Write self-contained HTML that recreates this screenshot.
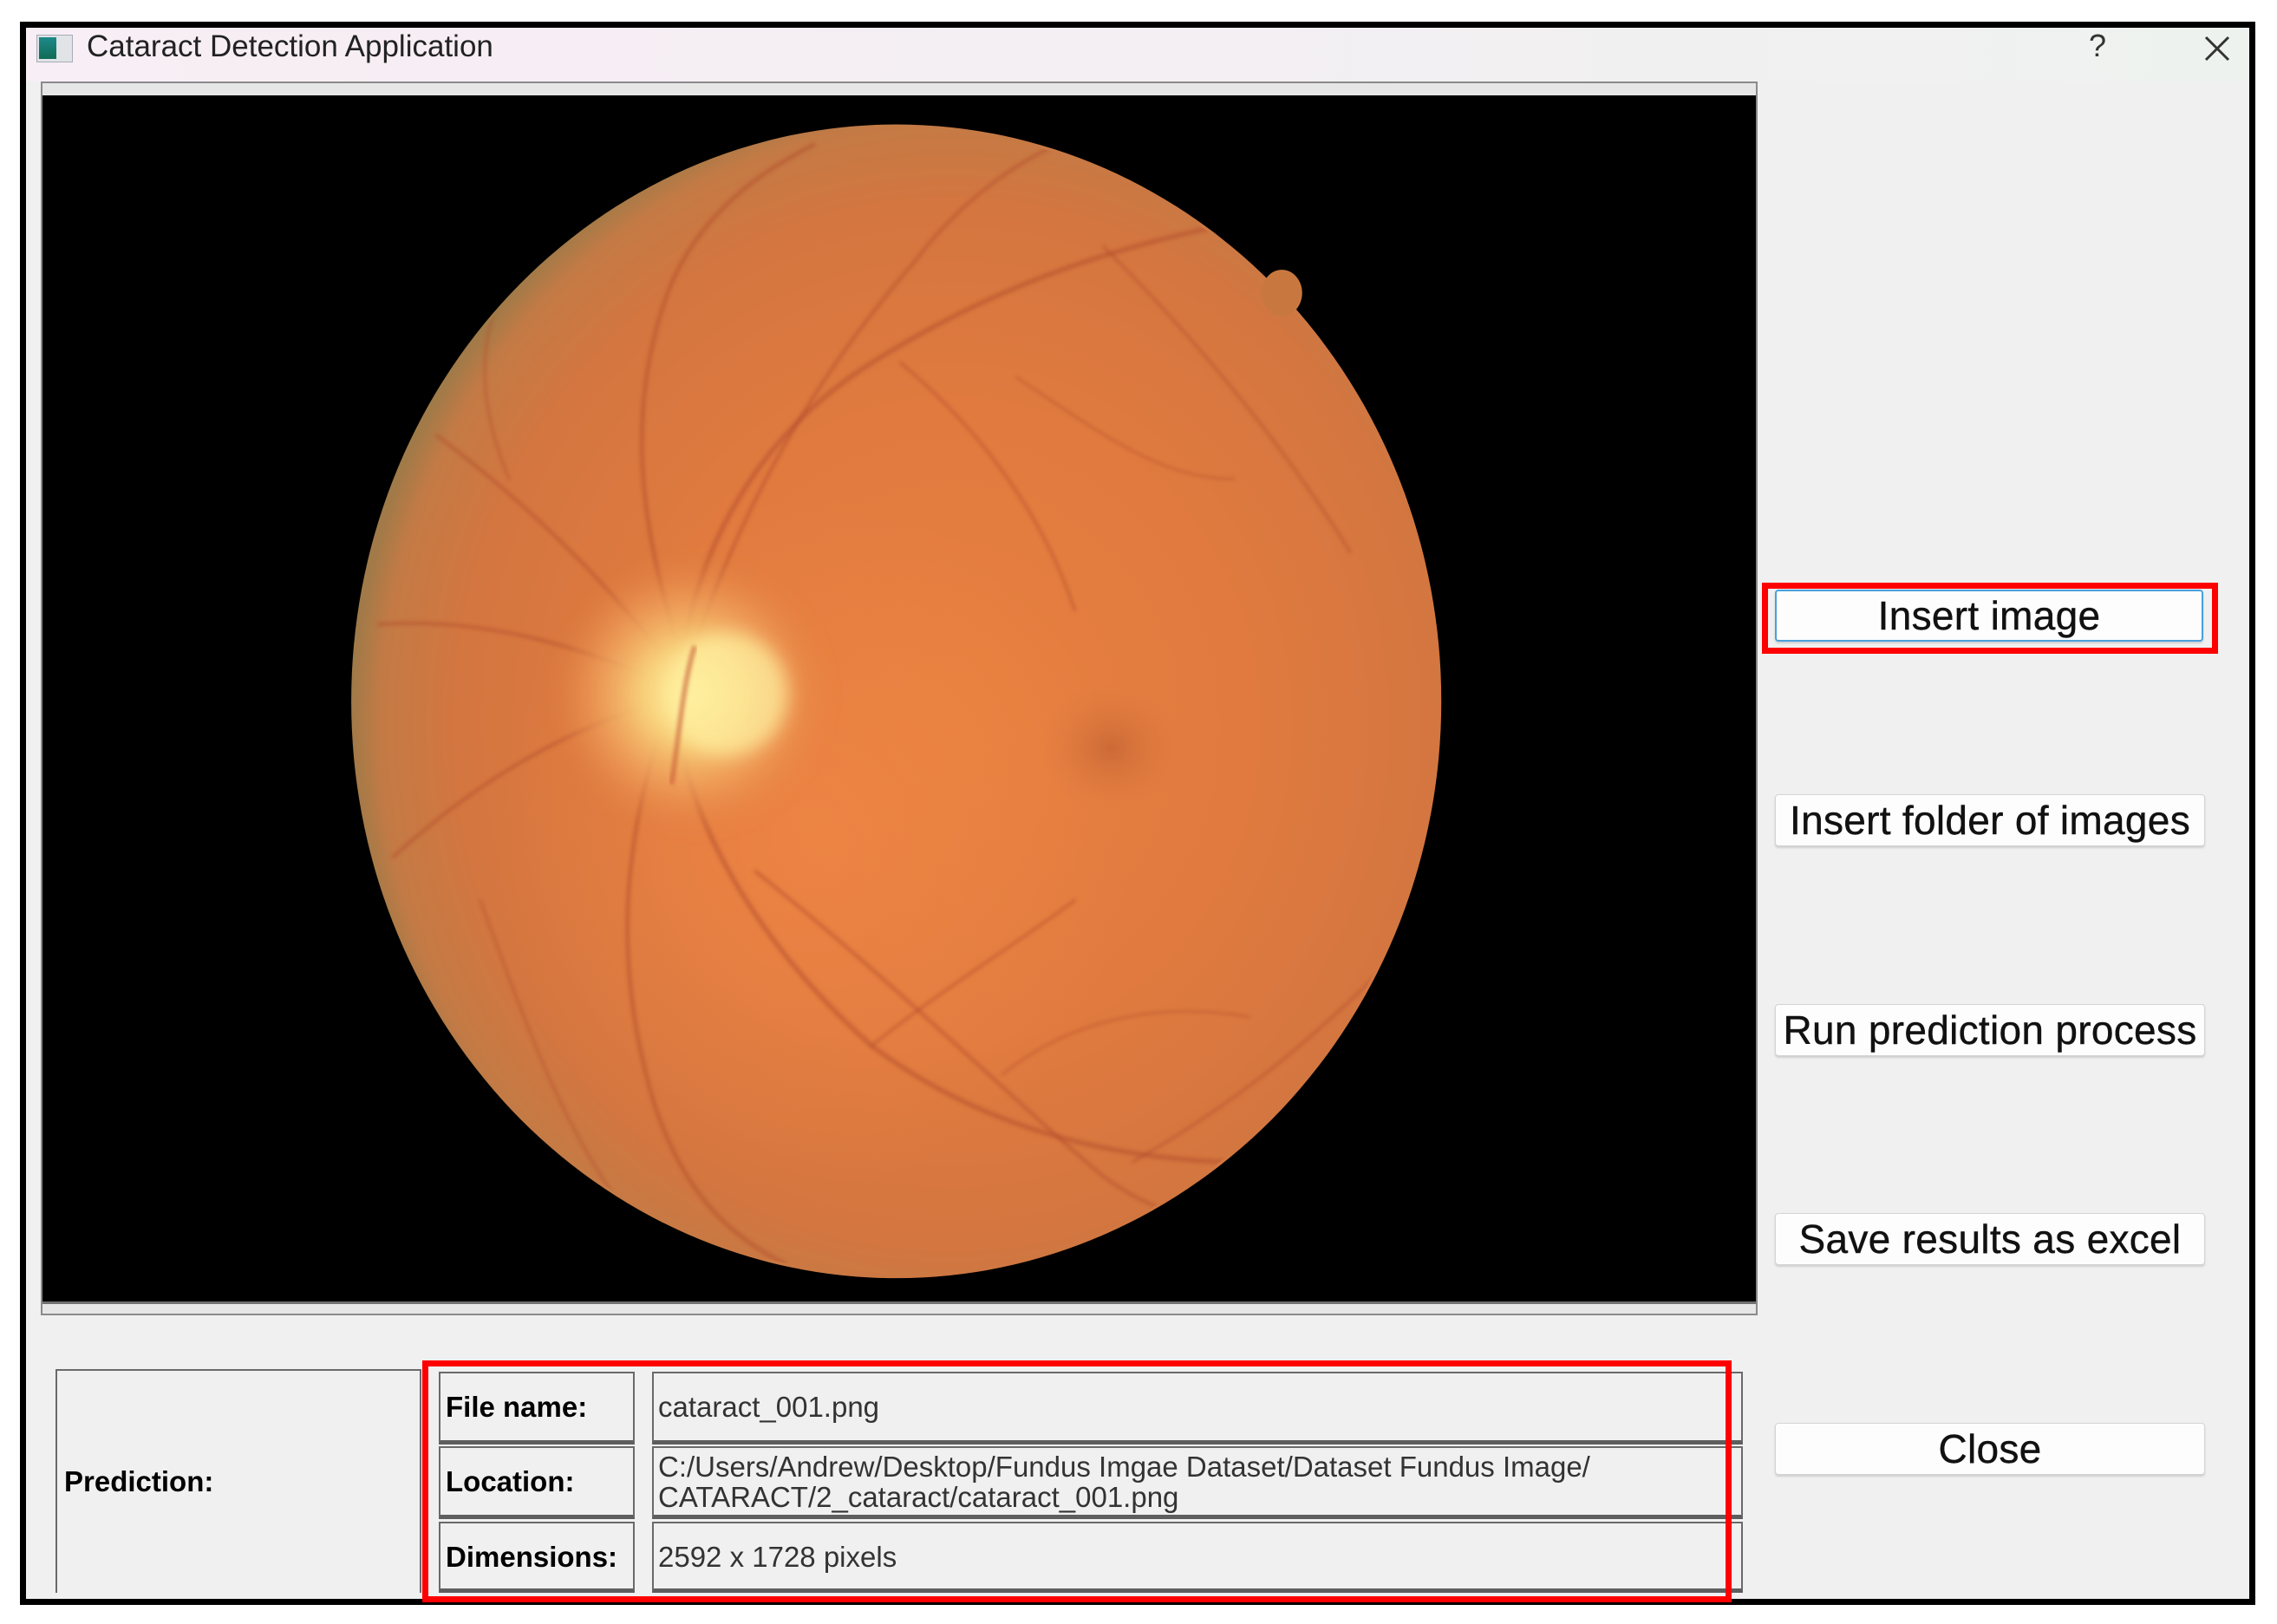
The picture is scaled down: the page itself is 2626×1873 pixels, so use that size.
<!DOCTYPE html>
<html><head><meta charset="utf-8">
<style>
html,body{margin:0;padding:0;}
body{width:2626px;height:1873px;background:#fff;position:relative;overflow:hidden;font-family:"Liberation Sans",Arial,sans-serif;}
.abs{position:absolute;}
#frame{left:23px;top:25px;width:2564px;height:1812px;border:7px solid #000;background:#f0f0f0;}
#title{left:30px;top:32px;width:2564px;height:62px;background:linear-gradient(90deg,#f8eef5 0%,#f3eff2 55%,#eef2ef 100%);}
.btn{position:absolute;left:2047px;width:494px;height:58px;background:#fdfdfd;border:1px solid #d4d4d4;border-radius:4px;box-shadow:0 2px 2px #cfcfcf;font-size:46px;color:#111;text-align:center;line-height:58px;letter-spacing:0.3px;-webkit-text-stroke:0.4px #111;}
.cell{position:absolute;background:#f0f0f0;border:2px solid #6a6a6a;border-bottom:5px solid #5e5e5e;box-sizing:border-box;font-size:33px;color:#222;}
.lab{font-weight:bold;color:#000;}
</style></head><body>
<div id="frame" class="abs"></div>
<div id="title" class="abs"></div>
<div class="abs" style="left:42px;top:40px;width:40px;height:30px;background:#e0e4e6;border:1px solid #aab;"></div>
<div class="abs" style="left:45px;top:43px;width:20px;height:25px;background:linear-gradient(#1f8a8a,#0f6b55);"></div>
<div class="abs" style="left:100px;top:30px;font-size:35px;line-height:48px;color:#222;">Cataract Detection Application</div>
<div class="abs" style="left:2409px;top:28px;font-size:36px;line-height:50px;color:#333;">?</div>
<svg class="abs" style="left:2541px;top:40px" width="32" height="32" viewBox="0 0 32 32"><path d="M3 3L29 29M29 3L3 29" stroke="#333" stroke-width="3"/></svg>

<div class="abs" style="left:47px;top:94px;width:1980px;height:1423px;background:#e6e6e6;border:2px solid #8a8a8a;box-sizing:border-box;"></div>
<div class="abs" style="left:49px;top:110px;width:1976px;height:1391px;background:#000;"></div>
<svg class="abs" style="left:49px;top:110px" width="1976" height="1391" viewBox="28 66 1182 830" preserveAspectRatio="none">
<defs>
<clipPath id="c"><ellipse cx="617" cy="483" rx="374" ry="395"/></clipPath>
<radialGradient id="g" cx="0.55" cy="0.52" r="0.55">
<stop offset="0" stop-color="#e8803f"/>
<stop offset="0.5" stop-color="#e07a3f"/>
<stop offset="0.82" stop-color="#d47640"/>
<stop offset="0.95" stop-color="#c47a45"/>
<stop offset="1" stop-color="#a07a48"/>
</radialGradient>
<radialGradient id="d" cx="0.5" cy="0.5" r="0.5">
<stop offset="0" stop-color="#fff2a0"/>
<stop offset="0.35" stop-color="#f8d07a"/>
<stop offset="0.7" stop-color="#f0a05a" stop-opacity="0.7"/>
<stop offset="1" stop-color="#e28848" stop-opacity="0"/>
</radialGradient>
<radialGradient id="f" cx="0.5" cy="0.5" r="0.5">
<stop offset="0" stop-color="#b85a30" stop-opacity="0.55"/>
<stop offset="1" stop-color="#d8763e" stop-opacity="0"/>
</radialGradient>
<radialGradient id="h" cx="0.5" cy="0.5" r="0.5">
<stop offset="0" stop-color="#f58a48" stop-opacity="0.55"/>
<stop offset="1" stop-color="#f08a4a" stop-opacity="0"/>
</radialGradient>
<filter id="b"><feGaussianBlur stdDeviation="1.2"/></filter>
<filter id="b2" x="-50%" y="-50%" width="200%" height="200%"><feGaussianBlur stdDeviation="6"/></filter>
</defs>
<ellipse cx="617" cy="483" rx="376" ry="397" fill="url(#g)"/>
<ellipse cx="883" cy="202" rx="14" ry="16" fill="#c8783f"/>
<g clip-path="url(#c)">
<ellipse cx="560" cy="580" rx="220" ry="240" fill="url(#h)"/>
<ellipse cx="765" cy="515" rx="50" ry="45" fill="url(#f)"/>
<g fill="none" stroke="#b24a2c" stroke-opacity="0.5" stroke-linecap="round" filter="url(#b)">
<path d="M470,450 C480,380 520,300 600,250 C680,200 760,170 870,150" stroke-width="3.5"/>
<path d="M465,440 C440,360 430,280 460,200 C480,150 520,120 560,100" stroke-width="3"/>
<path d="M478,445 C510,350 560,260 630,180 C660,140 700,110 740,95" stroke-width="2.5"/>
<path d="M465,490 C470,560 520,650 600,720 C680,780 780,805 900,800" stroke-width="3.5"/>
<path d="M455,500 C430,580 420,660 450,760 C470,820 500,850 540,870" stroke-width="3"/>
<path d="M455,470 C400,445 330,425 260,430" stroke-width="2.5"/>
<path d="M450,485 C380,505 320,545 270,590" stroke-width="2.5"/>
<path d="M455,450 C400,380 340,330 300,300" stroke-width="2.5"/>
<path d="M600,720 C650,680 700,650 740,620" stroke-width="2"/>
<path d="M620,250 C680,300 720,360 740,420" stroke-width="2"/>
<path d="M520,600 C620,680 700,760 760,810 C800,840 850,850 900,840" stroke-width="2.5"/>
<path d="M760,170 C820,230 880,300 930,380" stroke-width="2"/>
<path d="M780,800 C850,760 900,720 960,660" stroke-width="2"/>
<path d="M350,330 C320,260 330,200 380,150" stroke-width="1.8"/>
<path d="M330,620 C360,700 380,760 420,820" stroke-width="1.8"/>
<path d="M700,260 C760,300 800,330 850,330" stroke-width="1.5"/>
<path d="M690,740 C740,700 800,690 860,700" stroke-width="1.5"/>
</g>
</g>
<ellipse cx="475" cy="478" rx="95" ry="95" fill="url(#d)" filter="url(#b2)"/>
<ellipse cx="500" cy="478" rx="42" ry="42" fill="#fff0a0" opacity="0.7" filter="url(#b2)"/>
<path d="M478,445 C470,470 468,500 462,540" stroke="#c85a34" stroke-width="3.5" fill="none" opacity="0.6" filter="url(#b)"/>
</svg>
<div class="abs" style="left:49px;top:1501px;width:1976px;height:3px;background:#707070;"></div>

<div class="abs" style="left:2032px;top:672px;width:512px;height:68px;border:7px solid #f00;"></div>
<div class="btn" style="top:680px;width:490px;height:56px;line-height:56px;border:2px solid #4aa0dc;">Insert image</div>
<div class="btn" style="top:916px;">Insert folder of images</div>
<div class="btn" style="top:1158px;">Run prediction process</div>
<div class="btn" style="top:1399px;">Save results as excel</div>
<div class="btn" style="top:1641px;">Close</div>

<div class="cell" style="left:64px;top:1579px;width:422px;height:258px;border-bottom:none;"></div>
<div class="abs lab" style="left:74px;top:1690px;font-size:33px;">Prediction:</div>
<div class="cell" style="left:506px;top:1582px;width:226px;height:84px;"></div>
<div class="cell" style="left:506px;top:1668px;width:226px;height:84px;"></div>
<div class="cell" style="left:506px;top:1755px;width:226px;height:82px;"></div>
<div class="cell" style="left:752px;top:1582px;width:1258px;height:84px;"></div>
<div class="cell" style="left:752px;top:1668px;width:1258px;height:84px;"></div>
<div class="cell" style="left:752px;top:1755px;width:1258px;height:82px;"></div>
<div class="abs lab" style="left:514px;top:1604px;font-size:33px;">File name:</div>
<div class="abs lab" style="left:514px;top:1690px;font-size:33px;">Location:</div>
<div class="abs lab" style="left:514px;top:1777px;font-size:33px;">Dimensions:</div>
<div class="abs" style="left:759px;top:1604px;font-size:33px;color:#333;">cataract_001.png</div>
<div class="abs" style="left:759px;top:1674px;font-size:33px;line-height:35px;color:#333;">C:/Users/Andrew/Desktop/Fundus Imgae Dataset/Dataset Fundus Image/<br>CATARACT/2_cataract/cataract_001.png</div>
<div class="abs" style="left:759px;top:1777px;font-size:33px;color:#333;">2592 x 1728 pixels</div>
<div class="abs" style="left:487px;top:1569px;width:1496px;height:265px;border:7px solid #f00;"></div>
</body></html>
